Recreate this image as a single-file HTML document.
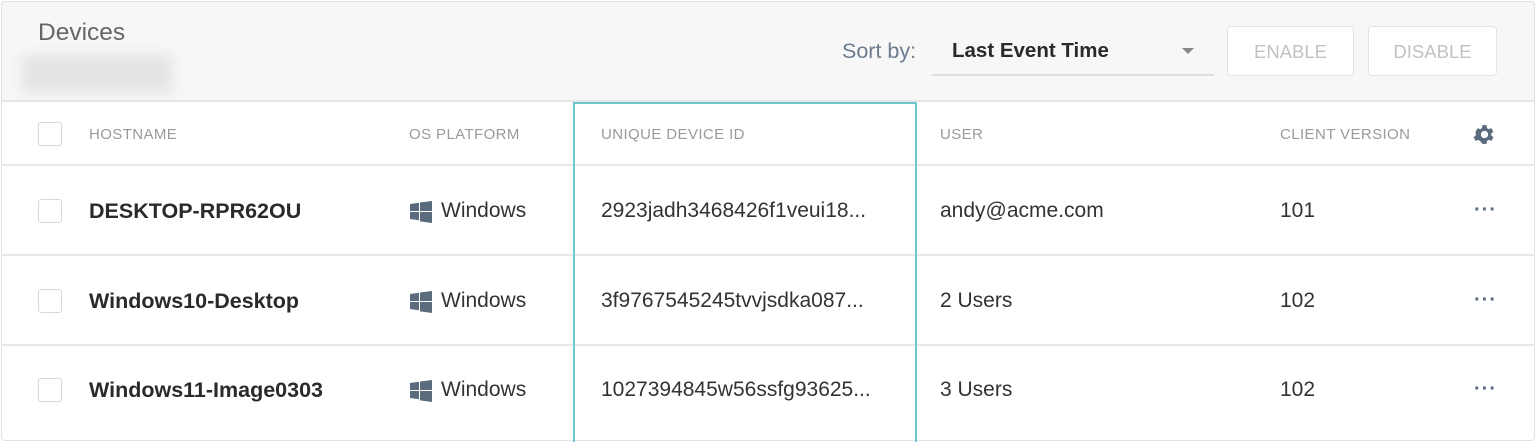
<!DOCTYPE html>
<html><head><style>
*{box-sizing:border-box;margin:0;padding:0}
body{width:1536px;height:430px;overflow:hidden;background:#fff;font-family:"Liberation Sans",sans-serif;position:relative}
.hdr{position:absolute;left:1px;top:1px;width:1534px;height:101px;background:#f7f7f7;border-bottom:2px solid #e6e6e6;border-radius:4px 4px 0 0}
.wrap{position:absolute;left:1px;top:1px;width:1534px;height:440px;border:1px solid #e2e2e2;border-radius:4px}
.t{position:absolute;white-space:nowrap}
.blur{position:absolute;left:22px;top:55px;width:150px;height:38px;background:#e4e4e4;filter:blur(6px)}
.btn{position:absolute;top:26px;height:50px;border:1px solid #e3e3e3;border-radius:4px;background:#fff;color:#c2c2c2;font-size:18.5px;text-align:center;line-height:50px}
.line{position:absolute;left:1px;width:1534px;height:2px;background:#e8e8e8}
.cb{position:absolute;left:38px;width:24px;height:24px;border:1.5px solid #d8d8d8;border-radius:3px;background:#fff}
.th{font-size:15px;letter-spacing:0.4px;color:#9a9a9a;top:126px}
.c{font-size:21px;color:#333}
.b{font-weight:bold;color:#2a2a2a;font-size:21.5px}
.dots{position:absolute;left:1474px;font-size:20px;color:#5a6b7d;letter-spacing:1px;font-weight:bold}
</style></head><body>
<div class="hdr"></div>
<div class="wrap"></div>
<div class="t" style="left:38px;top:19px;font-size:24.5px;color:#666">Devices</div>
<div class="blur"></div>
<div class="t" style="left:842px;top:39px;font-size:21.5px;color:#6b7c8e">Sort by:</div>
<div class="t" style="left:952px;top:39px;font-size:20.5px;color:#2a2a2a;font-weight:bold">Last Event Time</div>
<div style="position:absolute;left:932px;top:74px;width:282px;height:2px;background:#dedede"></div>
<div style="position:absolute;left:1182px;top:48px;border-left:6px solid transparent;border-right:6px solid transparent;border-top:6px solid #888"></div>
<div class="btn" style="left:1227px;width:127px">ENABLE</div>
<div class="btn" style="left:1368px;width:129px">DISABLE</div>

<div class="line" style="top:164px"></div>
<div class="line" style="top:254px"></div>
<div class="line" style="top:344px"></div>

<div style="position:absolute;left:573px;top:102px;width:344px;height:340px;border:2px solid #6cc8cc;border-bottom:none"></div>

<div class="cb" style="top:122px"></div>
<div class="t th" style="left:89px">HOSTNAME</div>
<div class="t th" style="left:409px">OS PLATFORM</div>
<div class="t th" style="left:601px">UNIQUE DEVICE ID</div>
<div class="t th" style="left:940px">USER</div>
<div class="t th" style="left:1280px">CLIENT VERSION</div>
<svg style="position:absolute;left:1472px;top:122px" width="25" height="25" viewBox="0 0 24 24"><path fill="#5a6b7d" d="M19.4 13a7.5 7.5 0 0 0 0-2l2.1-1.6-2-3.5-2.5 1a7.7 7.7 0 0 0-1.7-1L15 3h-4l-.4 2.9a7.7 7.7 0 0 0-1.7 1l-2.5-1-2 3.5L4.6 11a7.5 7.5 0 0 0 0 2l-2.1 1.6 2 3.5 2.5-1a7.7 7.7 0 0 0 1.7 1L11 21h4l.4-2.9a7.7 7.7 0 0 0 1.7-1l2.5 1 2-3.5zM13 15.5a3.5 3.5 0 1 1 0-7 3.5 3.5 0 0 1 0 7z" transform="translate(-1 0)"/></svg>

<div class="cb" style="top:199px"></div>
<div class="t c b" style="left:89px;top:199px">DESKTOP-RPR62OU</div>
<svg style="position:absolute;left:410px;top:201px" width="22" height="22" viewBox="0 0 22 22"><path fill="#5a6b7d" d="M0 3l9-1.3V10H0zM10 1.5L22 0v10H10zM0 11h9v8.3L0 18zM10 11h12v11l-12-1.6z"/></svg>
<div class="t c" style="left:441px;top:199px">Windows</div>
<div class="t c" style="left:601px;top:199px">2923jadh3468426f1veui18...</div>
<div class="t c" style="left:940px;top:199px">andy@acme.com</div>
<div class="t c" style="left:1280px;top:199px">101</div>
<div class="dots" style="top:199px">···</div>

<div class="cb" style="top:289px"></div>
<div class="t c b" style="left:89px;top:289px">Windows10-Desktop</div>
<svg style="position:absolute;left:410px;top:291px" width="22" height="22" viewBox="0 0 22 22"><path fill="#5a6b7d" d="M0 3l9-1.3V10H0zM10 1.5L22 0v10H10zM0 11h9v8.3L0 18zM10 11h12v11l-12-1.6z"/></svg>
<div class="t c" style="left:441px;top:289px">Windows</div>
<div class="t c" style="left:601px;top:289px">3f9767545245tvvjsdka087...</div>
<div class="t c" style="left:940px;top:289px">2 Users</div>
<div class="t c" style="left:1280px;top:289px">102</div>
<div class="dots" style="top:289px">···</div>

<div class="cb" style="top:378px"></div>
<div class="t c b" style="left:89px;top:378px">Windows11-Image0303</div>
<svg style="position:absolute;left:410px;top:380px" width="22" height="22" viewBox="0 0 22 22"><path fill="#5a6b7d" d="M0 3l9-1.3V10H0zM10 1.5L22 0v10H10zM0 11h9v8.3L0 18zM10 11h12v11l-12-1.6z"/></svg>
<div class="t c" style="left:441px;top:378px">Windows</div>
<div class="t c" style="left:601px;top:378px">1027394845w56ssfg93625...</div>
<div class="t c" style="left:940px;top:378px">3 Users</div>
<div class="t c" style="left:1280px;top:378px">102</div>
<div class="dots" style="top:378px">···</div>
</body></html>
